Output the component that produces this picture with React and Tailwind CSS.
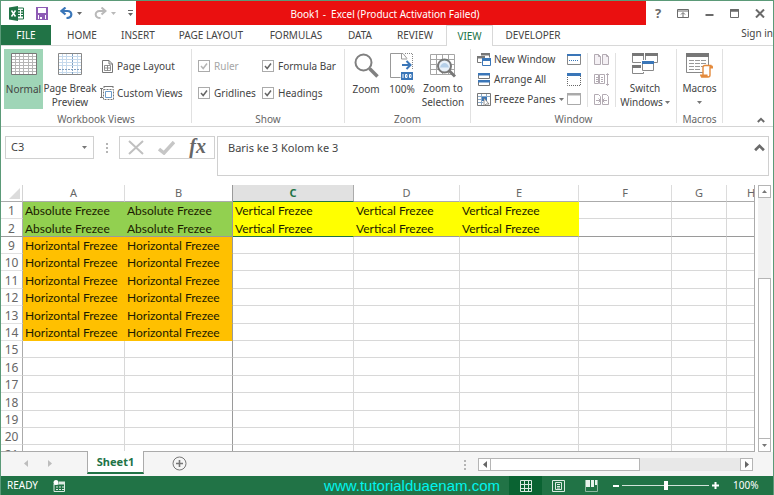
import clsx from "clsx";

const tabs = [
  { name: "HOME", width: "w-[56px]" },
  { name: "INSERT", width: "w-[56px]" },
  { name: "PAGE LAYOUT", width: "w-[90px]" },
  { name: "FORMULAS", width: "w-[80px]" },
  { name: "DATA", width: "w-[48px]" },
  { name: "REVIEW", width: "w-[62px]" },
  { name: "VIEW", width: "w-[47px]", active: true },
  { name: "DEVELOPER", width: "w-[80px]" },
];

const columns = [
  { name: "A", width: "w-[102px]" },
  { name: "B", width: "w-[108px]", frozenEdge: true },
  { name: "C", width: "w-[121px]", selected: true },
  { name: "D", width: "w-[106px]" },
  { name: "E", width: "w-[119px]" },
  { name: "F", width: "w-[93px]" },
  { name: "G", width: "w-[55px]" },
  { name: "H", width: "" },
];

const A = "Absolute Frezee";
const V = "Vertical Frezee";
const H = "Horizontal Frezee";

const rows = [
  { n: 1, height: "h-[17px]", cells: [A, A, V, V, V] },
  { n: 2, height: "h-[18px]", cells: [A, A, V, V, V], frozenEdge: true },
  { n: 9, height: "h-[17px]", cells: [H, H] },
  { n: 10, height: "h-[17px]", cells: [H, H] },
  { n: 11, height: "h-[18px]", cells: [H, H] },
  { n: 12, height: "h-[17px]", cells: [H, H] },
  { n: 13, height: "h-[18px]", cells: [H, H] },
  { n: 14, height: "h-[17px]", cells: [H, H] },
  { n: 15, height: "h-[17px]", cells: [] },
  { n: 16, height: "h-[18px]", cells: [] },
  { n: 17, height: "h-[17px]", cells: [] },
  { n: 18, height: "h-[18px]", cells: [] },
  { n: 19, height: "h-[17px]", cells: [] },
  { n: 20, height: "h-[17px]", cells: [] },
  { n: 21, height: "h-[18px]", cells: [] },
];

const fills = {
  [A]: "bg-[#92d050] border-[#92d050]",
  [V]: "bg-[#ffff00] border-[#ffff00]",
  [H]: "bg-[#ffc000] border-[#ffc000]",
};

const Caret = ({ className }) => (
  <svg className={clsx("shrink-0", className)} width="5" height="3" viewBox="0 0 5 3" fill="currentColor">
    <path d="M0 0h5L2.5 3z" />
  </svg>
);

const Chevron = ({ size = 9 }) => (
  <svg width={size} height={size} viewBox="0 0 10 10" fill="none" stroke="#6a6a6a" strokeWidth="2.4">
    <path d="M1 7.5L5 3.5l4 4" />
  </svg>
);

/* ---------- title bar ---------- */

const TitleBar = () => (
  <header className="flex h-[24px] shrink-0 items-stretch">
    <div className="flex w-[135px] items-center pl-2">
      <svg width="15" height="15" viewBox="0 0 15 15" aria-label="Excel">
        <path d="M8 2h6.500v11H8z" fill="#fff" stroke="#217346" />
        <path d="M9 4h2v1.500H9zM12 4h2v1.500h-2zM9 6.500h2V8H9zM12 6.500h2V8h-2zM9 9h2v1.500H9zM12 9h2v1.500h-2z" fill="#217346" />
        <path d="M0 1.500L9 0v15l-9-1.500z" fill="#217346" />
        <path d="M2.500 4.500l4 6M6.500 4.500l-4 6" stroke="#fff" strokeWidth="1.500" />
      </svg>
      <button aria-label="Save" className="ml-3">
        <svg width="12" height="13" viewBox="0 0 12 13">
          <path d="M0 0h12v13H0z" fill="#8e5cb5" />
          <path d="M2 1h8v5H2zM2 8h8v4H2z" fill="#fff" />
          <path d="M3 8h6v4H3z" fill="#8e5cb5" />
          <path d="M4 10h2v2H4z" fill="#fff" />
        </svg>
      </button>
      <button aria-label="Undo" className="ml-3 flex items-center gap-1 text-[#666]">
        <svg width="13" height="12" viewBox="0 0 13 12" fill="none" stroke="#3a76b8" strokeWidth="2.200">
          <path d="M5.500 0.500L1.500 4l4 3.500M2 4h5.500c5 0 5.500 7-1 7" />
        </svg>
        <Caret />
      </button>
      <button aria-label="Redo" className="ml-3 flex items-center gap-1 text-[#b9b9b9]">
        <svg width="13" height="12" viewBox="0 0 13 12" fill="none" stroke="#b9b9b9" strokeWidth="2">
          <path d="M7.500 0.500L11.500 4l-4 3.500M11 4H5.500c-5 0-5.500 7 1 7" />
        </svg>
        <Caret />
      </button>
      <button aria-label="Customize Quick Access Toolbar" className="ml-3">
        <svg width="5" height="6" viewBox="0 0 5 6" fill="#666">
          <path d="M0 0h5v1H0zM0 3h5L2.500 6z" />
        </svg>
      </button>
    </div>
    <h1 className="flex flex-1 items-center justify-center whitespace-pre bg-[#ea1010] pr-3 pt-0.5 text-[10px] text-white">
      {"Book1 -  Excel (Product Activation Failed)"}
    </h1>
    <div className="flex w-[127px] items-center justify-between pl-[9px] pr-2 text-[#6a6a6a]">
      <button aria-label="Help" className="text-[13px] font-bold leading-none">?</button>
      <button aria-label="Ribbon Display Options">
        <svg width="12" height="9" viewBox="0 0 12 9" fill="none" stroke="#6a6a6a">
          <path d="M0.500 0.500h11v8H0.500zM0 2h12M6 8V4M4 5.500l2-2 2 2" />
        </svg>
      </button>
      <button aria-label="Minimize">
        <svg width="9" height="9" viewBox="0 0 9 9" fill="#6a6a6a">
          <path d="M0.500 5h8v2h-8z" />
        </svg>
      </button>
      <button aria-label="Restore">
        <svg width="9" height="9" viewBox="0 0 9 9" fill="none" stroke="#6a6a6a">
          <path d="M0.500 0.500h8v8h-8z" />
          <path d="M0 1.500h9" strokeWidth="2.500" />
        </svg>
      </button>
      <button aria-label="Close">
        <svg width="10" height="9" viewBox="0 0 10 9" stroke="#6a6a6a" strokeWidth="2">
          <path d="M1 0.500l8 8M9 0.500l-8 8" />
        </svg>
      </button>
    </div>
  </header>
);

const RibbonTabs = () => (
  <nav className="flex h-[21px] shrink-0 items-stretch border-b border-[#d8d8d8] text-[10px]">
    <button className="mr-[3px] w-[50px] bg-[#217346] text-white">FILE</button>
    {tabs.map((tab) => (
      <button
        key={tab.name}
        className={clsx(
          "shrink-0 whitespace-nowrap",
          tab.width,
          tab.active ? "-mb-px border border-b-0 border-[#d8d8d8] bg-white text-[#217346]" : "text-[#444]"
        )}
      >
        {tab.name}
      </button>
    ))}
    <a href="#signin" className="ml-auto whitespace-nowrap leading-[17px] text-[#444]">
      Sign in
    </a>
  </nav>
);

/* ---------- ribbon ---------- */

const Group = ({ label, className, children }) => (
  <section className={clsx("flex shrink-0 flex-col", className)}>
    <div className="flex h-[62px] shrink-0 items-start">{children}</div>
    <h2 className="text-center leading-[16px] text-[#666]">{label}</h2>
  </section>
);

const Divider = ({ className }) => <div className={clsx("w-px shrink-0 bg-[#e1e1e1]", className)} />;

const BigButton = ({ icon, lines, active, caret, className }) => (
  <button
    className={clsx(
      "flex h-[60px] shrink-0 flex-col items-center whitespace-nowrap leading-[14px]",
      active && "bg-[#9fd5b7]",
      className
    )}
  >
    <span className="flex h-[33px] items-start justify-center pt-1">{icon}</span>
    {lines.map((line, i) => (
      <span key={line || i} className="flex min-h-[14px] items-center gap-0.5">
        {line}
        {caret && i === lines.length - 1 && <Caret className="text-[#777]" />}
      </span>
    ))}
  </button>
);

const SmallButton = ({ icon, label, caret }) => (
  <button className="flex h-5 items-center gap-[3px] whitespace-nowrap">
    <span className="flex w-[14px] justify-center">{icon}</span>
    {label}
    {caret && <Caret className="text-[#777]" />}
  </button>
);

const Check = ({ label, disabled }) => (
  <label className={clsx("flex h-5 items-center gap-1 whitespace-nowrap", disabled && "text-[#a6a6a6]")}>
    <span className="grid">
      <input
        type="checkbox"
        defaultChecked
        disabled={disabled}
        className="col-start-1 row-start-1 size-[12px] appearance-none border border-[#ababab] bg-white"
      />
      <svg
        className="pointer-events-none col-start-1 row-start-1"
        width="12"
        height="12"
        viewBox="0 0 12 12"
        fill="none"
        stroke={disabled ? "#b5b5b5" : "#666"}
        strokeWidth="1.500"
      >
        <path d="M3 6l2.200 2.500L9 3.500" />
      </svg>
    </span>
    {label}
  </label>
);

const NormalIcon = () => (
  <svg width="26" height="22" viewBox="0 0 26 22" fill="none">
    <path d="M0.500 0.500h25v21h-25z" fill="#fff" stroke="#777" />
    <path
      d="M1 3.500h24M1 6.500h24M1 9.500h24M1 12.500h24M1 15.500h24M1 18.500h24M4.500 1v20M8.500 1v20M12.500 1v20M17.500 1v20M21.500 1v20"
      stroke="#b5b5b5"
    />
  </svg>
);

const PageBreakIcon = () => (
  <svg width="24" height="22" viewBox="0 0 24 22" fill="none">
    <path d="M0.500 0.500h23v21h-23z" fill="#fff" stroke="#888" />
    <path d="M1 3.500h22M1 6.500h22M1 9.500h22M1 12.500h22M1 19.500h22M4.500 1v20M8.500 1v20M19.500 1v20" stroke="#c5d9ec" />
    <path d="M1 16.500h22M14.500 1v20" stroke="#7f9fc0" strokeDasharray="2 1" />
  </svg>
);

const PageLayoutIcon = () => (
  <svg width="11" height="13" viewBox="0 0 11 13" fill="none" stroke="#777">
    <path d="M0.500 0.500h6.500l3.500 3.500v8.500H0.500zM7 0.500V4h3.500" />
    <path d="M2.500 5.500h6v5h-6zM2.500 8h6M5.500 5.500v5" strokeWidth="0.800" />
  </svg>
);

const CustomViewsIcon = () => (
  <svg width="14" height="14" viewBox="0 0 14 14" fill="none" stroke="#777">
    <path d="M0 2.500h3M0 11.500h3M1.500 3v8M4 0.500h9M4 0v2M13 0v2" />
    <path d="M3.500 3.500h10v10h-10z" strokeDasharray="2 1" />
    <path d="M5.500 5.500h6v6h-6z" stroke="#6b9bca" />
  </svg>
);

const ZoomIcon = () => (
  <svg width="25" height="25" viewBox="0 0 25 25" fill="none" stroke="#808080">
    <circle cx="9.500" cy="9.500" r="8" strokeWidth="2" />
    <path d="M15.500 15.500l8 8" strokeWidth="3.500" />
  </svg>
);

const HundredIcon = () => (
  <svg width="24" height="27" viewBox="0 0 24 27" fill="none">
    <path d="M10.500 24.500h-10V0.500H13l4 5" stroke="#999" />
    <path d="M11.500 0.500V6h5.500" stroke="#999" />
    <path d="M15 0.500h7.500V17" stroke="#888" strokeDasharray="1 1" />
    <path d="M12 12h8M16.500 8l4 4-4 4" stroke="#3a76b8" strokeWidth="2" />
    <path d="M11 19h12v8H11z" fill="#3a76b8" />
    <path d="M13 21v4M15.500 21.500h1.500v3h-1.500zM19.500 21.500H21v3h-1.500z" stroke="#fff" />
  </svg>
);

const ZoomSelectionIcon = () => (
  <svg width="26" height="25" viewBox="0 0 26 25" fill="none">
    <path d="M0.500 1.500h24v20h-24zM0 6.500h24M0 11.500h24M0 16.500h24M6.500 1v20M12.500 1v20M18.500 1v20" stroke="#a5a5a5" />
    <circle cx="14.500" cy="13" r="6.500" fill="#e9f1f9" stroke="#777" strokeWidth="2" />
    <path d="M10 14.500c1-6 8-6 9 0z" fill="#b5cfe8" />
    <path d="M19 17.500l6 6" stroke="#777" strokeWidth="3" />
  </svg>
);

const NewWindowIcon = () => (
  <svg width="14" height="13" viewBox="0 0 14 13" fill="none">
    <path d="M4.500 0.500h8v4M0.500 9.500v-6h7M0.500 9.500h4" stroke="#777" />
    <path d="M4 0h9v2.500H4zM0 3h8v2.500H0z" fill="#777" />
    <path d="M5.500 5.500h8v7h-8z" fill="#fff" stroke="#3a76b8" />
    <path d="M5 5h9v3H5z" fill="#3a76b8" />
  </svg>
);

const ArrangeIcon = () => (
  <svg width="12" height="13" viewBox="0 0 12 13" fill="none">
    <path d="M0.500 0.500h11v5H0.500zM0.500 7.500h11v5H0.500z" stroke="#777" />
    <path d="M0 0h12v2.500H0zM0 7h12v2.500H0z" fill="#3a76b8" />
  </svg>
);

const FreezeIcon = () => (
  <svg width="14" height="13" viewBox="0 0 14 13" fill="none">
    <path d="M0.500 0.500h13v12H0.500z" stroke="#777" />
    <path d="M1 3.500h12M1 9.500h5M4.500 1v11M9.500 1v3M1 6.500h3" stroke="#8aa9c8" />
    <path d="M5 4h5v4H5z" fill="#3a76b8" />
    <path d="M7 5v8l2-2h3z" fill="#fff" stroke="#777" strokeWidth="0.800" />
  </svg>
);

const SplitIcon = () => (
  <svg width="14" height="11" viewBox="0 0 14 11" fill="none">
    <path d="M0.500 0.500h13v10H0.500z" fill="#fff" stroke="#888" />
    <path d="M0 0h14v2H0z" fill="#3a76b8" />
    <path d="M2 6.500h10" stroke="#3a76b8" strokeDasharray="1 1" />
  </svg>
);

const HideIcon = () => (
  <svg width="14" height="13" viewBox="0 0 14 13" fill="none">
    <path d="M0.500 2v10.500h13V2" stroke="#666" strokeDasharray="1 1" />
    <path d="M0 0h14v3H0z" fill="#3a76b8" />
  </svg>
);

const UnhideIcon = () => (
  <svg width="14" height="12" viewBox="0 0 14 12" fill="none">
    <path d="M0.500 0.500h13v11H0.500z" fill="#fff" stroke="#aaa" />
    <path d="M0 0h14v2.500H0z" fill="#aaa" />
  </svg>
);

const SideBySideIcon = () => (
  <svg width="15" height="11" viewBox="0 0 15 11" fill="#f4f0f4" stroke="#b3abb3">
    <path d="M0.500 0.500h4l2 2v8h-6zM4.500 0.500v2h2M8.500 0.500h4l2 2v8h-6zM12.500 0.500v2h2" />
  </svg>
);

const SyncScrollIcon = () => (
  <svg width="15" height="13" viewBox="0 0 15 13" fill="none" stroke="#b3abb3">
    <path d="M0.500 1.500h4v9h-4zM5.500 1.500h5v9h-5zM2 4.500h2M2 6.500h2M2 8.500h2M7 4.500h2M7 6.500h2M7 8.500h2M13.500 1v11M12 2l1.500-1.500L15 2M12 11l1.500 1.500L15 11" />
  </svg>
);

const ResetPositionIcon = () => (
  <svg width="15" height="11" viewBox="0 0 15 11" fill="none" stroke="#b3abb3">
    <path d="M0.500 0.500h4l2 2v8h-6zM8.500 0.500h4l2 2v8h-6zM2 6.500h4M4.500 4.500l2 2-2 2M13 6.500H9M10.500 4.500l-2 2 2 2" />
  </svg>
);

const SwitchIcon = () => (
  <svg width="26" height="22" viewBox="0 0 26 22" fill="none">
    <path d="M0.500 0.500h11v9H0.500zM13.500 0.500h12v9h-12zM0.500 12.500h11v8H0.500z" fill="#fff" stroke="#888" />
    <path d="M0 0h12v3H0zM13 0h13v3H13zM0 12h12v3H0z" fill="#777" />
    <path d="M9 7h13v12H9z" fill="#fff" />
    <path d="M10.500 8.500h11v9h-11z" fill="#fff" stroke="#888" />
    <path d="M10 8h12v3H10z" fill="#3a76b8" />
  </svg>
);

const MacrosIcon = () => (
  <svg width="27" height="25" viewBox="0 0 27 25" fill="none">
    <path d="M0.500 0.500h22v19h-22z" fill="#fff" stroke="#888" />
    <path d="M0 0h23v4H0z" fill="#777" />
    <path d="M3 7.500h17M3 10.500h17M3 13.500h14M3 16.500h11" stroke="#999" strokeDasharray="5 1" />
    <path d="M17 22V14.500c0-1 1-2 2-2h6.500c-1 0-1.500 1-1.500 2V22c0 1-1 2-2 2h-6z" fill="#fff" stroke="#e48a3c" strokeWidth="1.400" />
    <path d="M14 21.500h7.500c0 1.500.500 2.500 1 2.500H15.500c-1 0-1.500-1-1.500-2.500zM24 12.500h2c1 0 1 1 1 3h-3z" fill="#e48a3c" />
  </svg>
);

const IconColumn = ({ items, className }) => (
  <div className={clsx("flex shrink-0 flex-col", className)}>
    {items.map(([label, icon]) => (
      <button key={label} aria-label={label} className="flex h-5 items-center justify-center">
        {icon}
      </button>
    ))}
  </div>
);

const Ribbon = () => (
  <div className="flex h-[81px] shrink-0 border-b border-[#d5d5d5] pt-[3px] text-[10px] text-[#444]">
    <Group label="Workbook Views" className="w-[190px]">
      <BigButton icon={<NormalIcon />} lines={["Normal"]} active className="ml-[3px] w-[39px]" />
      <BigButton icon={<PageBreakIcon />} lines={["Page Break", "Preview"]} className="w-[54px]" />
      <div className="ml-[3px] flex flex-col gap-[7px] pt-[7px]">
        <SmallButton icon={<PageLayoutIcon />} label="Page Layout" />
        <SmallButton icon={<CustomViewsIcon />} label="Custom Views" />
      </div>
    </Group>
    <Divider className="mb-[3px]" />
    <Group label="Show" className="w-[152px]">
      <div className="ml-1.5 grid grid-cols-[64px_auto] gap-y-[7px] pt-[7px]">
        <Check label="Ruler" disabled />
        <Check label="Formula Bar" />
        <Check label="Gridlines" />
        <Check label="Headings" />
      </div>
    </Group>
    <Divider className="mb-[3px]" />
    <Group label="Zoom" className="w-[125px]">
      <BigButton icon={<ZoomIcon />} lines={["Zoom"]} className="ml-1 w-[34px]" />
      <BigButton icon={<HundredIcon />} lines={["100%"]} className="w-[38px]" />
      <BigButton icon={<ZoomSelectionIcon />} lines={["Zoom to", "Selection"]} className="w-[44px]" />
    </Group>
    <Divider className="mb-[3px]" />
    <Group label="Window" className="w-[205px]">
      <div className="ml-1.5 flex w-[86px] flex-col">
        <SmallButton icon={<NewWindowIcon />} label="New Window" />
        <SmallButton icon={<ArrangeIcon />} label="Arrange All" />
        <SmallButton icon={<FreezeIcon />} label="Freeze Panes" caret />
      </div>
      <IconColumn
        className="ml-1 w-[14px]"
        items={[
          ["Split", <SplitIcon />],
          ["Hide", <HideIcon />],
          ["Unhide", <UnhideIcon />],
        ]}
      />
      <Divider className="mx-1.5 my-1 h-[54px]" />
      <IconColumn
        className="w-[15px]"
        items={[
          ["View Side by Side", <SideBySideIcon />],
          ["Synchronous Scrolling", <SyncScrollIcon />],
          ["Reset Window Position", <ResetPositionIcon />],
        ]}
      />
      <Divider className="ml-1.5 my-1 h-[54px]" />
      <BigButton icon={<SwitchIcon />} lines={["Switch", "Windows"]} caret className="ml-0.5 w-[54px]" />
    </Group>
    <Divider className="mb-[3px]" />
    <Group label="Macros" className="w-[45px]">
      <BigButton icon={<MacrosIcon />} lines={["Macros", ""]} caret className="w-[45px]" />
    </Group>
    <Divider className="mb-[3px]" />
    <button aria-label="Collapse the Ribbon" className="ml-auto mr-2 self-end pb-0.5">
      <Chevron size={8} />
    </button>
  </div>
);

/* ---------- formula bar ---------- */

const FormulaBar = () => (
  <div className="flex h-[58px] shrink-0 items-start pl-1 pr-1 pt-[9px] text-[11px] text-[#444]">
    <div className="flex h-[23px] w-[89px] shrink-0 items-center border border-[#d0d0d0] pl-[5px] pr-1.5">
      <input aria-label="Name Box" defaultValue="C3" className="w-0 flex-1 outline-none" />
      <Caret className="text-[#777]" />
    </div>
    <div className="flex h-[23px] w-[25px] shrink-0 flex-col items-center justify-center gap-0.5">
      <i className="size-0.5 bg-[#b5b5b5]" />
      <i className="size-0.5 bg-[#b5b5b5]" />
      <i className="size-0.5 bg-[#b5b5b5]" />
    </div>
    <div className="mr-[2px] flex h-[23px] w-[96px] shrink-0 items-center justify-between border border-[#d0d0d0] pl-2 pr-2">
      <button aria-label="Cancel">
        <svg width="16" height="15" viewBox="0 0 16 15" stroke="#c0c0c0" strokeWidth="2">
          <path d="M1 1l14 13M15 1L1 14" />
        </svg>
      </button>
      <button aria-label="Enter">
        <svg width="17" height="14" viewBox="0 0 17 14" fill="none" stroke="#c6c6c6" strokeWidth="3.500">
          <path d="M1 8l5 4L16 1" />
        </svg>
      </button>
      <button
        aria-label="Insert Function"
        className="pb-1 font-['Liberation_Serif',serif] text-[20px] font-bold italic leading-[18px] text-[#666]"
      >
        fx
      </button>
    </div>
    <div className="flex h-[40px] flex-1 items-start border border-[#d0d0d0] pr-[3px] pt-[3px]">
      <textarea
        aria-label="Formula"
        defaultValue="Baris ke 3 Kolom ke 3"
        className="h-[34px] w-0 flex-1 resize-none pl-2.5 leading-4 outline-none"
      />
      <button aria-label="Collapse Formula Bar" className="pt-0.5">
        <Chevron size={11} />
      </button>
    </div>
  </div>
);

/* ---------- grid ---------- */

const Sheet = () => (
  <div className="min-w-0 flex-1 overflow-hidden border-b border-r border-[#ababab]">
    <table className="w-full table-fixed border-separate border-spacing-0">
      <thead className="text-[11px] text-[#666]">
        <tr className="h-[17px]">
          <th className="w-[22px] border-b border-r border-[#ababab] border-r-[#d4d4d4] p-0">
            <svg className="ml-auto mr-0.5" width="11" height="11" viewBox="0 0 11 11" fill="#dcdcdc">
              <path d="M11 0v11H0z" />
            </svg>
          </th>
          {columns.map((col) => (
            <th
              key={col.name}
              scope="col"
              className={clsx(
                "overflow-hidden border-b border-r p-0 leading-4",
                col.width,
                col.name === "H" && "border-r-0 pl-[20px]",
                col.selected
                  ? "border-[#217346] border-r-[#ababab] bg-[#e1e1e1] font-bold text-[#217346]"
                  : "border-[#ababab] font-normal",
                !col.selected && (col.frozenEdge ? "border-r-[#9a9a9a]" : "border-r-[#dcdcdc]")
              )}
            >
              {col.name}
            </th>
          ))}
        </tr>
      </thead>
      <tbody className="text-[12px] text-[#1c1c00]">
        {rows.map((row) => (
          <tr key={row.n} className={row.height}>
            <th
              scope="row"
              className={clsx(
                "border-b border-r border-r-[#ababab] p-0 pt-0.5 font-normal leading-[14px] text-[#666]",
                row.frozenEdge ? "border-b-[#9a9a9a]" : "border-b-[#e1e1e1]"
              )}
            >
              {row.n}
            </th>
            {columns.map((col, i) => {
              const text = row.cells[i];
              return (
                <td
                  key={col.name}
                  className={clsx(
                    "overflow-hidden whitespace-nowrap border-b border-r p-0 pl-0.5 pt-0.5 font-['Lato','Noto_Sans',sans-serif] leading-[14px]",
                    text ? fills[text] : "border-[#d8d8d8]",
                    col.name === "H" && "border-r-0",
                    col.frozenEdge && "border-r-[#9a9a9a]",
                    row.frozenEdge && (col.selected ? "border-b-[#217346]" : "border-b-[#9a9a9a]")
                  )}
                >
                  {text}
                </td>
              );
            })}
          </tr>
        ))}
      </tbody>
    </table>
  </div>
);

const VerticalScroll = () => (
  <div className="flex w-[18px] shrink-0 flex-col items-center pl-0.5 pr-0.5">
    <button aria-label="Scroll up" className="flex h-[13px] w-[13px] shrink-0 items-center justify-center border border-[#b5b5b5] text-[#777]">
      <Caret className="rotate-180" />
    </button>
    <div className="h-20 w-[13px] bg-[#f1f1f1]" />
    <div className="w-[13px] flex-1 border border-[#b5b5b5] bg-white" />
    <button aria-label="Scroll down" className="flex h-[13px] w-[13px] shrink-0 items-center justify-center border border-t-0 border-[#b5b5b5] text-[#777]">
      <Caret />
    </button>
  </div>
);

const Arrow = ({ left, color = "#666" }) => (
  <svg width="4" height="7" viewBox="0 0 4 7" fill={color}>
    <path d={left ? "M4 0v7L0 3.500z" : "M0 0v7l4-3.500z"} />
  </svg>
);

const SheetTabs = () => (
  <div className="flex h-[24px] shrink-0 items-start bg-[#f5f5f5]">
    <div className="flex h-[23px] w-[86px] items-center gap-5 pl-[23px]">
      <button aria-label="Previous sheet">
        <Arrow left color="#bdbdbd" />
      </button>
      <button aria-label="Next sheet">
        <Arrow color="#bdbdbd" />
      </button>
    </div>
    <button className="-mt-px h-[23px] w-[57px] border-x border-b-2 border-[#ababab] border-b-[#217346] bg-white pt-0.5 text-[11px] font-bold text-[#217346]">
      Sheet1
    </button>
    <button aria-label="New sheet" className="ml-[28px] mt-1">
      <svg width="15" height="15" viewBox="0 0 15 15" fill="none" stroke="#777">
        <circle cx="7.500" cy="7.500" r="6.500" />
        <path d="M7.500 4v7M4 7.500h7" strokeWidth="1.600" />
      </svg>
    </button>
    <div className="ml-auto mr-[12px] mt-2 flex flex-col gap-0.5">
      <i className="size-0.5 bg-[#b5b5b5]" />
      <i className="size-0.5 bg-[#b5b5b5]" />
      <i className="size-0.5 bg-[#b5b5b5]" />
    </div>
    <div className="mr-5 mt-1.5 flex h-[13px] w-[275px] items-stretch bg-[#e8e8e8]">
      <button aria-label="Scroll left" className="flex w-[13px] items-center justify-center border border-[#b5b5b5] bg-white">
        <Arrow left />
      </button>
      <div className="w-[149px] border border-l-0 border-[#b5b5b5] bg-white" />
      <button aria-label="Scroll right" className="ml-auto flex w-[13px] items-center justify-center border border-[#b5b5b5] bg-white">
        <Arrow />
      </button>
    </div>
  </div>
);

/* ---------- status bar ---------- */

const StatusBar = () => (
  <footer className="flex h-[19px] shrink-0 items-center bg-[#217346] text-[10px] text-white">
    <span className="ml-[6px] w-[46px]">READY</span>
    <button aria-label="Record Macro">
      <svg width="12" height="12" viewBox="0 0 12 12">
        <path d="M1 4h10.500v7.500H1z" fill="none" stroke="#dcebe2" />
        <path d="M6 1.500h6V4H6z" fill="#dcebe2" />
        <path d="M3 7h2M6 7h2M9 7h2M3 9.500h2M6 9.500h2M9 9.500h2" stroke="#dcebe2" />
        <circle cx="3" cy="2.500" r="2.500" fill="#fff" />
      </svg>
    </button>
    <a
      href="#site"
      className="ml-auto mr-[9px] font-['Liberation_Sans',Arial,sans-serif] text-[15px] leading-[19px] text-[#00f5ee]"
    >
      www.tutorialduaenam.com
    </a>
    <button aria-label="Normal" className="flex h-full w-[33px] items-center justify-center bg-[#0a6332]">
      <svg width="12" height="12" viewBox="0 0 12 12" fill="none" stroke="#dcebe2">
        <path d="M0.500 0.500h11v11H0.500zM4.500 0v12M8.500 0v12M0 4.500h12M0 8.500h12" />
      </svg>
    </button>
    <button aria-label="Page Layout" className="flex h-full w-[33px] items-center justify-center">
      <svg width="13" height="12" viewBox="0 0 13 12" fill="none" stroke="#dcebe2">
        <path d="M0.500 0.500h12v11H0.500zM3.500 2.500h6v7h-6zM5 4.500h3M5 6.500h3M5 8h3" />
      </svg>
    </button>
    <button aria-label="Page Break Preview" className="flex h-full w-[33px] items-center justify-center">
      <svg width="13" height="12" viewBox="0 0 13 12" fill="none" stroke="#dcebe2">
        <path d="M0.500 0v11.500h12V0" stroke="#8fb9a1" />
        <path d="M1 0h4v7H1zM6 0h3v7H6zM10 0h2v5h-2z" fill="#e8f2ec" stroke="none" />
      </svg>
    </button>
    <button aria-label="Zoom out" className="ml-1 flex w-[7px] justify-center">
      <svg width="6" height="6" viewBox="0 0 6 6" fill="#fff">
        <path d="M0 2h6v2H0z" />
      </svg>
    </button>
    <input
      type="range"
      aria-label="Zoom"
      defaultValue="50"
      className="mx-[3px] h-[9px] w-[87px] appearance-none bg-transparent bg-[linear-gradient(#d3e3da,#d3e3da)] bg-[length:100%_1px] bg-center bg-no-repeat [&::-webkit-slider-thumb]:h-[9px] [&::-webkit-slider-thumb]:w-[4px] [&::-webkit-slider-thumb]:appearance-none [&::-webkit-slider-thumb]:bg-white"
    />
    <button aria-label="Zoom in">
      <svg width="7" height="7" viewBox="0 0 7 7" stroke="#fff" strokeWidth="2">
        <path d="M0 3.500h7M3.500 0v7" />
      </svg>
    </button>
    <span className="ml-[14px] w-[40px]">100%</span>
  </footer>
);

const App = () => (
  <div className="flex h-screen flex-col overflow-hidden border border-b-0 border-[#5b9a78] bg-white font-['Noto_Sans','Open_Sans',sans-serif]">
    <TitleBar />
    <RibbonTabs />
    <Ribbon />
    <FormulaBar />
    <div className="flex min-h-0 flex-1 items-stretch">
      <Sheet />
      <VerticalScroll />
    </div>
    <SheetTabs />
    <StatusBar />
  </div>
);

export default App;
